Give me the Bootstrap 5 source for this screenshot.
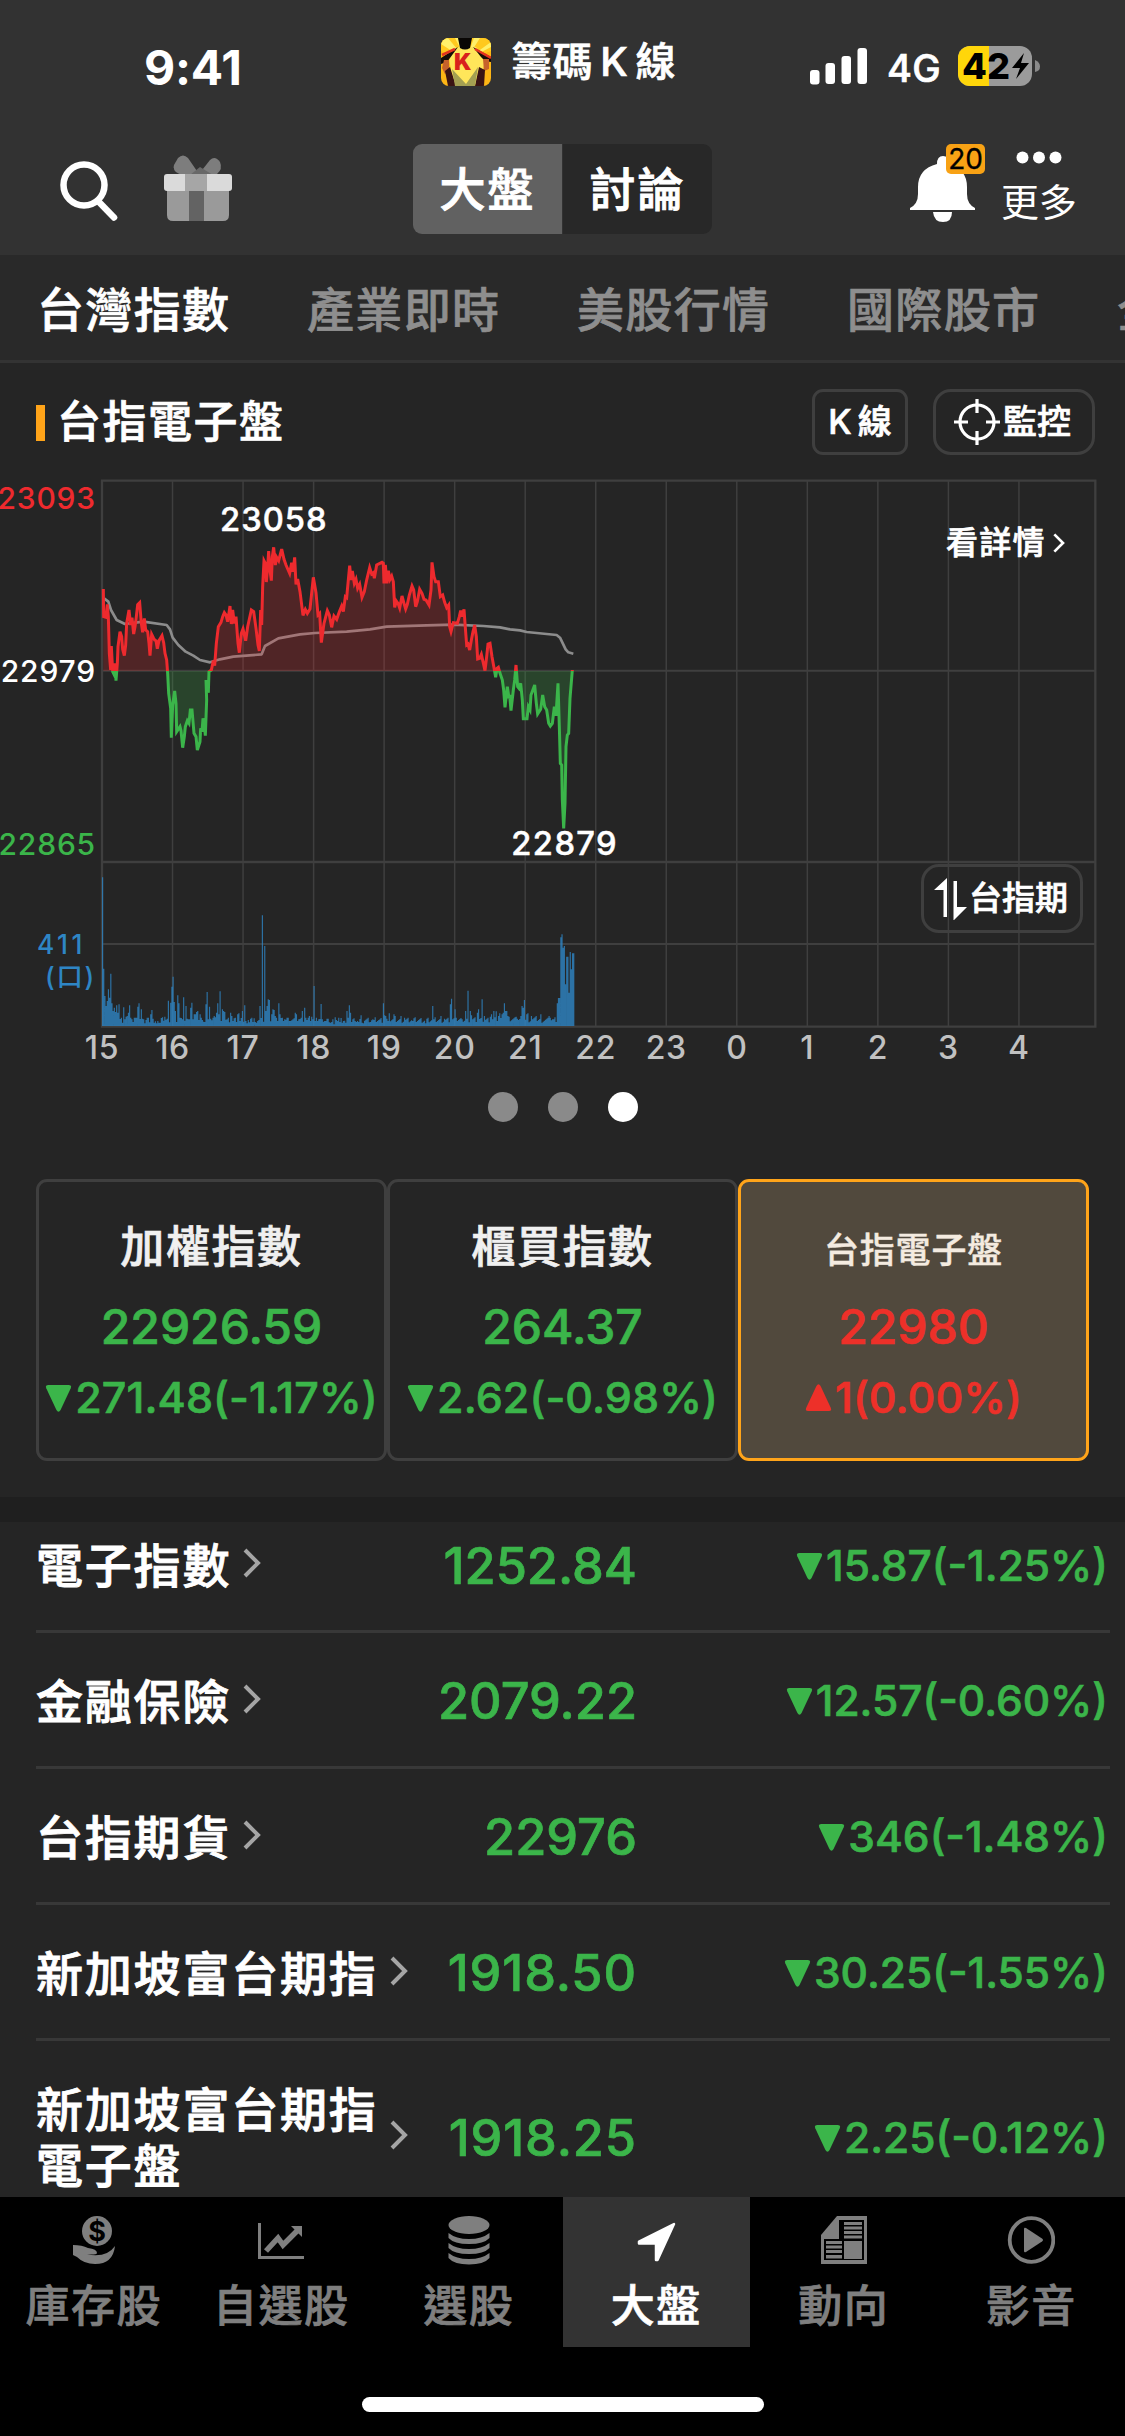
<!DOCTYPE html>
<html lang="zh-Hant">
<head>
<meta charset="utf-8">
<meta name="viewport" content="width=device-width, initial-scale=1">
<title>籌碼K線</title>
<link rel="stylesheet" href="https://cdn.jsdelivr.net/npm/bootstrap@5.3.0/dist/css/bootstrap.min.css">
<style>
:root{--up:#ed3029;--down:#3bb54a;--line:#3f3f3f}
html,body{overflow:hidden}
body{width:1125px;height:2436px;background:#252525;color:#fff;font-family:Inter,"Noto Sans CJK TC",sans-serif;line-height:1;font-weight:500;-webkit-text-stroke:.7px currentColor}
svg{display:block;flex:none}
svg text{-webkit-text-stroke:0}
.statusbar{height:144px;padding:0 83px 0 144px;background:#323232}
.clock{font-size:48px;font-weight:700;width:297px;padding-top:44px;letter-spacing:-.2px;-webkit-text-stroke:0}
.appname{font-size:40px;letter-spacing:1px;word-spacing:-5px;margin-left:21px;padding-top:42px;width:299px;white-space:nowrap}
.signal{padding-top:48px}
.netw{font-size:38px;font-weight:500;margin-left:19px;padding-top:49px;width:71px;letter-spacing:.3px}
.topbar{height:111px;background:#323232;padding-left:60px}
.seg{margin-left:180px}
.seg .btn{width:149px;height:90px;padding:0;border:0;border-radius:9px;font-size:46px;font-weight:500;letter-spacing:2px;color:#fff;background:#282828;line-height:90px;-webkit-text-stroke:.9px #fff}
.seg .btn.active{background:#616161;margin-right:2px;color:#fff}
.bellbox{margin-left:197px;height:90px;width:78px}
.pill{left:37px;top:0;width:39px;height:30px;background:#f8a215;color:#000;border-radius:5px;font-size:28px;line-height:31px;font-weight:400;-webkit-text-stroke:.3px #000}
.morebox{width:90px;height:90px;margin-left:7px;font-size:38px;font-weight:400;-webkit-text-stroke:0}
.tabsrow{height:105px;background:#292929;color:#8e8e8e;padding:3px 0 0 37px;font-size:47px;letter-spacing:1.35px}
.tabsrow span{flex:0 0 270px;white-space:nowrap}
.rule-top{height:3px;background:#333}
.sect{height:107px;padding:26px 30px 0 36px}
.accent{width:9px;height:36px;background:#ffa419}
.sect h1{font-size:44px;letter-spacing:1.5px;font-weight:500;margin:0 0 0 12px;flex:1}
.tool{border:3px solid var(--line);height:66px;font-size:34px}
.chartwrap{height:608px}
.swap{left:921px;top:394px;width:162px;height:69px;border-radius:18px;font-size:33px}
.more-link{left:946px;top:57px;font-size:32px;letter-spacing:1.2px}
.pager{height:31px;gap:30px;margin-top:14px}
.pager i{width:30px;height:30px;border-radius:50%;background:#8a8a8a}
.cards{padding:56px 36px 36px;gap:0}
.idx{width:351px;height:282px;border:3px solid var(--line);border-radius:11px;color:#f0f0f0;padding-top:38px;white-space:nowrap}
.idx .ttl{font-size:44px;height:54px;letter-spacing:1.6px}
.idx .val{font-size:48px;height:58px;margin-top:29px}
.idx .chg{font-size:43px;height:50px;margin-top:15px;letter-spacing:.1px}
.idx.on{border-color:#ffa41a;background:#51493d}
.idx.on .ttl{font-size:35px;letter-spacing:.8px;color:#f4ebe0;padding-top:6px;-webkit-text-stroke-width:.4px}
.up{color:var(--up)}.down{color:var(--down)}
.band{height:25px;background:#1f1f1f}
.quotes{height:675px;overflow:hidden;padding:0 15px 0 36px}
.q{height:136px;border-bottom:3px solid #383838;padding-top:4px}
.q:first-child{height:111px}
.q:first-child>*{position:relative;top:-12px}
.q:last-child{height:200px;border:0;padding-top:0;margin-top:-3px}
.q .nm{font-size:47px;letter-spacing:1.8px;line-height:56px;-webkit-text-stroke-width:.9px}
.q .grp{width:390px;gap:12px;white-space:nowrap}
.q .grp svg{margin-bottom:6px}
.q .num{font-size:50.5px;width:211px;font-weight:500;white-space:nowrap}
.q .num.wide{letter-spacing:.9px}
.q .dl{font-size:42.5px;flex:1;padding-right:2px}
.tabbar{height:150px;background:#000;color:#7f7f7f;font-size:44px;letter-spacing:1.5px}
.tabbar>div{flex:1;padding-top:18px}
.tabbar .active{background:#333;color:#fff}
.tabbar svg{margin-bottom:19px}
.homebar{height:89px;background:#000;padding-top:50px}
.homebar i{width:402px;height:15px;border-radius:8px;background:#fff}
</style>
</head>
<body>
<svg width="0" height="0" class="position-absolute">
<symbol id="dn" viewBox="0 0 26 28"><path d="M3 1.5H23Q26 1.5 24.8 4.5L15 25.5Q13 29 11 25.5L1.200 4.500Q0 1.500 3 1.500Z" fill="currentColor"/></symbol>
<symbol id="upt" viewBox="0 0 26 28"><path d="M3 26.500H23Q26 26.500 24.800 23.500L15 2.500Q13-1 11 2.500L1.200 23.500Q0 26.500 3 26.500Z" fill="currentColor"/></symbol>
<symbol id="chev" viewBox="0 0 18 30"><path d="M2 2 15 15 2 28" fill="none" stroke="#a5a5a5" stroke-width="4"/></symbol>
</svg>

<header>
<div class="statusbar d-flex align-items-start">
  <div class="clock">9:41</div>
  <svg width="50" height="48" viewBox="0 0 50 48" style="margin-top:38px">
    <defs><clipPath id="ic"><rect width="50" height="48" rx="8"/></clipPath></defs>
    <g clip-path="url(#ic)"><rect width="50" height="48" fill="#fdb515"/>
    <path d="M0 0H50V13L25 22 0 13Z" fill="#ffc91e"/><path d="M25 22 0 6V0H7ZM25 22 14 0H19ZM25 22 33 0H39ZM25 22 50 4V9Z" fill="#fff06a"/>
    <path d="M17 9 8 20 12 46H40L44 20 35 9Z" fill="#ffe65a"/>
    <path d="M17 0H31L29 10Q24 13 19 10Z" fill="#090705"/>
    <path d="M0 20 17 9 9 20 6 24 0 26ZM50 19 32 9 40 19 44 23 50 24Z" fill="#160d08"/>
    <path d="M1 17 14 11M34 11 50 20" stroke="#e3331e" stroke-width="2.500"/>
    <path d="M3 22H8V33L4 36 1 30ZM42 21H48V31L43 33Z" fill="#c6622b"/>
    <path d="M4 33 9 29 15 48H7ZM34 48 38 29 44 32 43 48Z" fill="#3a1414"/>
    <path d="M11 31 25 46 37 29 34 48H14Z" fill="#a4a052"/>
    <text x="13" y="32" font-family="Inter" font-weight="900" font-size="23" fill="#d8211c">K</text></g>
  </svg>
  <div class="appname">籌碼 K 線</div>
  <svg class="signal" width="58" height="86" viewBox="0 48 58 38" style="height:86px"><g fill="#fff"><rect x="0" y="70" width="9.500" height="14.500" rx="3"/><rect x="15.500" y="63" width="9.500" height="21" rx="3"/><rect x="31.500" y="56" width="9.500" height="28" rx="3"/><rect x="47.500" y="48" width="9.500" height="36" rx="3"/></g></svg>
  <div class="netw">4G</div>
  <svg width="84" height="40" viewBox="0 0 84 40" style="margin-top:46px"><defs><clipPath id="bt"><rect width="74" height="40" rx="12"/></clipPath></defs><g clip-path="url(#bt)"><rect width="74" height="40" fill="#9b9b9b"/><rect width="31" height="40" fill="#ffd60a"/></g><path d="M77 14Q82 16 82 20.500T77 26Z" fill="#8a8a8a"/><text x="4" y="33" font-family="Inter" font-weight="800" font-size="36" textLength="48" lengthAdjust="spacingAndGlyphs">42</text><path d="M66 7 54 22H62L58 33 71 17H63Z"/></svg>
</div>
<div class="topbar d-flex">
  <svg width="58" height="63" viewBox="0 0 58 63" style="margin-top:15px"><circle cx="24" cy="26" r="20.500" fill="none" stroke="#fff" stroke-width="6.500"/><path d="M38 42 54 58.500" stroke="#fff" stroke-width="6.500" stroke-linecap="round"/></svg>
  <svg width="70" height="68" viewBox="0 0 70 68" style="margin:10px 0 0 45px"><path d="M36 20 25 4Q20-1 15 4L11 11Q9 19 20 21H36Z" fill="#7d7d7d"/><path d="M36 20 47 6Q52 1 57 8 60 15 54 20Z" fill="#7d7d7d"/><path d="M27 21 37 13 50 21Z" fill="#686868"/><path d="M4 37H66V61Q66 67 60 67H10Q4 67 4 61Z" fill="#9a9a9a"/><path d="M26 37H41V67H26Z" fill="#636363"/><rect x="1" y="20" width="68" height="17" rx="3" fill="#dadada"/><path d="M22 20H44V37H22Z" fill="#a6a6a6"/></svg>
  <div class="seg btn-group align-self-start"><button class="btn active">大盤</button><button class="btn">討論</button></div>
  <div class="bellbox position-relative">
    <svg width="68" height="80" viewBox="0 0 68 80"><path d="M34 12Q40 12 40 20 58 25 58 43V50Q58 60 66 64V66H1V64Q9 60 9 50V43Q9 25 28 20 28 12 34 12ZM24 68H43Q43 78 34 78T24 68Z" fill="#fff"/></svg>
    <span class="pill position-absolute text-center">20</span>
  </div>
  <div class="morebox d-flex flex-column align-items-center">
    <svg width="46" height="28" viewBox="0 0 46 28"><g fill="#fff"><circle cx="6.500" cy="13.500" r="6"/><circle cx="23" cy="13.500" r="6"/><circle cx="39.500" cy="13.500" r="6"/></g></svg><div style="margin-top:11px">更多</div>
  </div>
</div>
<nav class="tabsrow d-flex align-items-center overflow-hidden"><span class="text-white">台灣指數</span><span>產業即時</span><span>美股行情</span><span>國際股市</span><span>全球指數</span></nav>
<div class="rule-top"></div>
</header>

<main>
<div class="sect d-flex align-items-start">
  <div class="d-flex align-items-center flex-fill" style="height:66px"><div class="accent" style="margin-top:2px"></div><h1>台指電子盤</h1></div>
  <div class="tool d-flex align-items-center justify-content-center" style="width:96px;border-radius:11px;margin-right:25px;word-spacing:-3px">K 線</div>
  <div class="tool d-flex align-items-center justify-content-center" style="width:162px;border-radius:18px;padding-right:3px"><svg width="46" height="46" viewBox="0 0 46 46" style="margin-right:3px"><g fill="none" stroke="#fff" stroke-width="3.200"><circle cx="23" cy="23" r="17"/><path d="M23 0V14M23 32V46M0 23H14M32 23H46"/></g></svg>監控</div>
</div>
<div class="chartwrap position-relative">
<svg id="chart" width="1125" height="608" viewBox="0 300 3375 1824" font-family="Inter, 'Noto Sans CJK TC', sans-serif" font-weight="500">
  <defs><clipPath id="above"><path d="M0 300H3375V903H0Z"/></clipPath><clipPath id="below"><path d="M0 903H3375V2000H0Z"/></clipPath></defs>
  <g stroke="#3f3f3f" fill="none"><path id="vg" stroke-width="4.500"/><path d="M306 902H3287M306 1722H3287" stroke-width="6"/><path d="M306 1476H3287" stroke-width="8"/><path d="M306 332H3286V1970H306Z" stroke-width="7"/></g>
  <path id="vol" fill="#2e86c5" opacity=".8"/>
  <path id="avg" fill="none" stroke="#8c8c8c" stroke-width="8" stroke-linejoin="round"/>
  <g clip-path="url(#above)"><path class="area" fill="#ee2a2e" opacity=".22"/><path class="ln" fill="none" stroke="#ee2a2e" stroke-width="9"/></g>
  <g clip-path="url(#below)"><path class="area" fill="#3bb54a" opacity=".22"/><path class="ln" fill="none" stroke="#3bb54a" stroke-width="9"/></g>
  <g font-size="90" text-anchor="end" letter-spacing="2.500"><text x="288" y="416" fill="#ee2a2e">23093</text><text x="288" y="936" fill="#fff">22979</text><text x="288" y="1455" fill="#3bb54a">22865</text></g>
  <g font-size="98" fill="#fff" text-anchor="middle" stroke="#fff" stroke-width="1.500"><text x="820" y="483" textLength="320">23058</text><text x="1692" y="1455" textLength="316">22879</text></g>
  <g fill="#2e86c5"><text x="111" y="1751" font-size="79" textLength="136">411</text><text x="135" y="1849" font-size="79" textLength="148">(口)</text></g>
  <g id="hours" font-size="96" fill="#c1c1c1" text-anchor="middle" letter-spacing="2"></g>
</svg>
<div class="more-link position-absolute d-flex align-items-center">看詳情<svg width="12" height="20" viewBox="0 0 18 30" style="margin-left:7px"><path d="M2 2 15 15 2 28" fill="none" stroke="#fff" stroke-width="4"/></svg></div>
<div class="swap tool position-absolute d-flex align-items-center justify-content-center"><svg width="33" height="42" viewBox="0 0 33 42" style="margin:0 2px 0 -2px"><path d="M13 0V39H9.500V12H0ZM19.500 3H23V29H33L20 42H19.500Z" fill="#fff"/></svg>台指期</div>
</div>
<div class="pager d-flex justify-content-center"><i></i><i></i><i class="bg-white"></i></div>
<section class="cards d-flex">
  <div class="idx d-flex flex-column align-items-center"><div class="ttl d-flex align-items-center">加權指數</div><div class="val down">22926.59</div><div class="chg down d-flex"><svg width="27" height="30" style="margin:7px 3px 0 0"><use href="#dn"/></svg>271.48(-1.17%)</div></div>
  <div class="idx d-flex flex-column align-items-center"><div class="ttl d-flex align-items-center">櫃買指數</div><div class="val down">264.37</div><div class="chg down d-flex"><svg width="27" height="30" style="margin:7px 3px 0 0"><use href="#dn"/></svg>2.62(-0.98%)</div></div>
  <div class="idx on d-flex flex-column align-items-center"><div class="ttl d-flex align-items-center">台指電子盤</div><div class="val up">22980</div><div class="chg up d-flex"><svg width="27" height="30" style="margin:7px 3px 0 0"><use href="#upt"/></svg>1(0.00%)</div></div>
</section>
<div class="band"></div>
<section class="quotes">
  <div class="q d-flex align-items-center"><div class="grp d-flex align-items-center"><div class="nm">電子指數</div><svg width="18" height="30"><use href="#chev"/></svg></div><div class="num down text-end">1252.84</div><div class="dl down d-flex justify-content-end"><svg width="27" height="30" style="margin:6px 3px 0 0"><use href="#dn"/></svg>15.87(-1.25%)</div></div>
  <div class="q d-flex align-items-center"><div class="grp d-flex align-items-center"><div class="nm">金融保險</div><svg width="18" height="30"><use href="#chev"/></svg></div><div class="num down text-end">2079.22</div><div class="dl down d-flex justify-content-end"><svg width="27" height="30" style="margin:6px 3px 0 0"><use href="#dn"/></svg>12.57(-0.60%)</div></div>
  <div class="q d-flex align-items-center"><div class="grp d-flex align-items-center"><div class="nm">台指期貨</div><svg width="18" height="30"><use href="#chev"/></svg></div><div class="num down text-end">22976</div><div class="dl down d-flex justify-content-end"><svg width="27" height="30" style="margin:6px 3px 0 0"><use href="#dn"/></svg>346(-1.48%)</div></div>
  <div class="q d-flex align-items-center"><div class="grp d-flex align-items-center"><div class="nm">新加坡富台期指</div><svg width="18" height="30"><use href="#chev"/></svg></div><div class="num wide down text-end">1918.50</div><div class="dl down d-flex justify-content-end"><svg width="27" height="30" style="margin:6px 3px 0 0"><use href="#dn"/></svg>30.25(-1.55%)</div></div>
  <div class="q d-flex align-items-center"><div class="grp d-flex align-items-center"><div class="nm">新加坡富台期指<br>電子盤</div><svg width="18" height="30"><use href="#chev"/></svg></div><div class="num wide down text-end">1918.25</div><div class="dl down d-flex justify-content-end"><svg width="27" height="30" style="margin:6px 3px 0 0"><use href="#dn"/></svg>2.25(-0.12%)</div></div>
</section>
</main>

<footer>
<div class="tabbar d-flex text-center">
  <div class="d-flex flex-column align-items-center"><svg width="46" height="50" viewBox="0 0 46 50"><circle cx="26" cy="16" r="15" fill="currentColor"/><text x="26" y="26" font-size="27" font-weight="700" font-family="Inter" text-anchor="middle" fill="#000" letter-spacing="0">$</text><path d="M2 30Q11 30 17 33 26 34 26 38 26 40 16 39.500 36 43 44 31 42 49 24 49 13 49 6 42L2 40Z" fill="currentColor"/></svg>庫存股</div>
  <div class="d-flex flex-column align-items-center"><svg width="46" height="50" viewBox="0 0 46 50"><path d="M1.500 8V42.500H46" fill="none" stroke="currentColor" stroke-width="3"/><path d="M8 36 20 23 25 30 39 16" fill="none" stroke="currentColor" stroke-width="5.500"/><path d="M33 11H44V22Z" fill="currentColor"/></svg>自選股</div>
  <div class="d-flex flex-column align-items-center"><svg width="42" height="50" viewBox="0 0 42 50"><g fill="currentColor"><ellipse cx="21" cy="10" rx="20.500" ry="9"/><path d="M.5 18Q8 24 21 24T41.500 18V23Q36 29 21 29T.5 23ZM.5 28Q8 34 21 34T41.500 28V33Q36 39 21 39T.5 33ZM.5 38Q8 44 21 44T41.500 38V43Q36 49.500 21 49.500T.5 43Z"/></g></svg>選股</div>
  <div class="active d-flex flex-column align-items-center"><svg width="40" height="50" viewBox="0 0 40 50"><path d="M38 9 21.500 45H20V28.500H3V26.500Z" fill="#fff" stroke="#fff" stroke-width="2.500" stroke-linejoin="round"/></svg>大盤</div>
  <div class="d-flex flex-column align-items-center"><svg width="46" height="50" viewBox="0 0 46 50"><path d="M16 1H46V49H0V20Z" fill="currentColor"/><path d="M18 5H43V45H3V24H18Z" fill="#000"/><path d="M23 7H41V10H23ZM23 11.500H41V14.500H23ZM23 16H41V19H23ZM23 20.500H41V23.500H23ZM23 26H41V44H23ZM5 26H21V29H5ZM5 30.500H21V33.500H5ZM5 35H21V38H5ZM5 40H21V43.500H5Z" fill="currentColor"/></svg>動向</div>
  <div class="d-flex flex-column align-items-center"><svg width="48" height="50" viewBox="0 0 48 50"><circle cx="24.500" cy="25" r="21.800" fill="none" stroke="currentColor" stroke-width="3.800"/><path d="M17 14Q17 12 19 13L35 23.500Q37 25 35 26.500L19 37Q17 38 17 36Z" fill="currentColor"/></svg>影音</div>
</div>
<div class="homebar d-flex justify-content-center"><i></i></div>
</footer>

<script src="https://cdn.jsdelivr.net/npm/bootstrap@5.3.0/dist/js/bootstrap.bundle.min.js"></script>
<script>
const price="310,657 311,740 318,742 322,703 325,740 328,850 332,900 334,828 338,905 343,915 345,880 348,932 352,880 354,830 360,785 365,800 368,838 373,857 377,825 380,760 387,720 392,765 396,743 401,792 405,770 409,740 413,704 419,698 424,760 428,787 433,745 437,780 443,785 447,820 450,857 455,793 460,803 464,810 468,812 472,836 477,812 486,797 491,818 495,850 500,870 503,910 506,970 512,1015 514,1103 518,1005 524,963 528,1000 530,1085 540,1070 543,1082 548,1133 553,1100 556,1070 562,1052 567,1060 571,1020 576,1020 582,1090 588,1100 592,1140 600,1115 602,1075 606,1085 609,1045 613,1065 616,1097 620,990 618,930 625,968 627,905 634,900 640,872 644,887 649,820 655,770 663,757 668,740 673,728 678,735 683,755 690,708 694,762 698,720 703,760 708,740 714,820 718,848 724,790 729,777 737,812 743,770 754,720 761,725 768,775 774,825 778,843 782,720 785,765 788,650 792,572 796,580 799,636 803,590 806,543 810,600 814,632 817,560 821,532 826,585 830,562 836,572 845,537 852,568 858,585 869,610 875,578 879,605 884,562 888,643 893,627 900,665 909,736 916,718 922,730 930,717 940,622 948,668 954,735 959,730 964,818 972,760 982,722 988,735 995,772 1002,738 1010,748 1018,725 1025,708 1030,725 1036,680 1040,683 1044,640 1049,587 1053,630 1057,603 1063,640 1068,628 1073,655 1079,643 1086,682 1093,665 1100,630 1109,593 1115,612 1120,608 1123,625 1130,585 1146,577 1150,580 1152,640 1156,585 1161,640 1165,602 1170,628 1175,618 1180,635 1184,712 1189,693 1194,700 1199,714 1206,678 1212,700 1217,717 1222,703 1228,675 1236,648 1241,660 1247,710 1252,695 1259,658 1266,670 1272,688 1278,690 1287,705 1293,660 1296,577 1302,620 1307,635 1315,635 1321,680 1328,675 1334,697 1340,713 1346,705 1349,770 1353,785 1360,758 1372,760 1378,740 1382,722 1387,740 1392,718 1395,760 1400,825 1404,822 1409,840 1415,805 1419,785 1424,765 1429,800 1433,867 1439,865 1444,853 1449,875 1455,902 1460,860 1464,822 1470,820 1476,860 1482,893 1487,922 1491,895 1495,892 1500,910 1507,930 1511,960 1515,1012 1522,950 1527,985 1529,975 1533,1022 1540,960 1544,930 1548,885 1553,950 1557,955 1562,940 1567,990 1570,1046 1581,1046 1585,1010 1590,1020 1593,975 1604,945 1609,1000 1613,1032 1622,1018 1628,975 1634,1010 1640,1020 1646,1060 1651,1068 1657,1060 1663,1010 1668,1037 1674,940 1678,1070 1681,1180 1685,1185 1687,1290 1691,1375 1695,1300 1698,1130 1702,1095 1706,1090 1710,985 1717,900";
const average="312,685 325,695 333,720 350,750 375,762 430,755 500,765 510,778 518,803 535,825 557,845 580,857 600,870 630,877 660,868 700,860 785,853 795,828 835,805 900,793 945,789 1040,785 1110,778 1160,770 1280,766 1360,764 1450,768 1500,772 1530,778 1560,781 1580,786 1670,795 1680,803 1697,838 1705,847 1720,851";
const volume="307:446 310:172 313:90 317:60 320:75 323:110 327:85 331:157 334:68 338:45 341:55 345:42 348:62 352:40 355:25 358:65 362:25 365:20 369:56 373:20 376:28 380:30 384:40 387:62 391:25 394:20 398:12 401:25 405:25 408:25 412:58 415:30 418:68 422:50 426:22 430:20 434:8 438:18 442:25 446:25 450:35 454:48 458:22 462:10 466:14 470:8 475:10 480:10 486:26 490:16 495:28 500:22 506:76 510:70 514:118 517:148 521:72 524:30 527:45 531:92 535:68 538:25 541:15 545:20 549:86 552:50 556:60 559:25 563:20 567:20 570:55 574:70 577:20 581:35 585:35 589:42 594:45 598:35 603:25 608:18 613:12 618:65 622:102 625:20 629:58 633:22 638:25 643:30 648:40 652:68 655:35 658:104 662:15 666:50 670:45 675:42 680:20 685:25 690:40 695:30 700:15 705:25 711:35 716:38 721:15 726:45 732:62 736:15 740:8 745:18 750:22 756:25 760:12 765:12 770:10 775:18 781:60 785:25 788:332 793:240 796:45 800:60 805:80 809:78 813:35 817:50 821:48 825:30 830:25 835:68 839:35 845:25 850:15 855:20 860:25 866:15 872:15 878:20 884:40 890:35 896:20 902:25 908:45 912:55 916:25 921:18 926:30 932:15 936:28 940:120 944:15 950:25 956:20 961:66 966:20 972:15 978:15 984:22 990:10 996:12 1002:5 1008:18 1014:25 1020:12 1030:15 1038:10 1042:45 1046:62 1050:40 1055:12 1065:15 1075:12 1081:32 1090:8 1100:22 1110:12 1120:18 1139:20 1150:68 1154:32 1158:30 1162:15 1168:38 1182:35 1186:30 1204:30 1214:25 1237:15 1257:18 1276:8 1298:60 1302:20 1324:30 1334:22 1350:65 1353:82 1364:50 1368:25 1384:20 1397:45 1402:106 1410:45 1414:32 1432:40 1436:50 1445:80 1451:30 1470:28 1474:35 1480:45 1487:44 1494:30 1497:38 1505:35 1508:40 1512:68 1516:45 1519:45 1523:30 1527:28 1548:28 1552:22 1563:30 1567:60 1570:55 1574:78 1578:35 1584:38 1595:30 1608:30 1621:35 1646:30 1650:25 1659:20 1672:68 1676:84 1679:84 1682:266 1685:275 1689:235 1692:240 1696:125 1699:208 1702:208 1706:100 1709:222 1713:170 1716:218 1719:218 1722:90";
const $=s=>document.querySelector(s), X0=306, STEP=3.525, ZERO=903, BASE=1968;
const line="M"+price.replace(/ /g,"L");
document.querySelectorAll(".ln").forEach(p=>p.setAttribute("d",line));
document.querySelectorAll(".area").forEach(p=>p.setAttribute("d",line+`V${ZERO}H310Z`));
$("#avg").setAttribute("d","M"+average.replace(/ /g,"L"));
const slots=[];
volume.split(" ").forEach(v=>{const [x,h]=v.split(":").map(Number);const i=Math.max(0,Math.round((x-X0)/STEP-.3));slots[i]=Math.max(slots[i]||0,h)});
let d="";
for(let i=0;i<402;i++){const h=slots[i]||10+(i*37%17);const x=(X0+i*STEP).toFixed(1);d+=`M${x} ${BASE}v${-h}h3.525V${BASE}Z`}
$("#vol").setAttribute("d",d);
let g="",t="";
for(let i=0;i<14;i++){const x=X0+i*211.6;if(i)g+=`M${x} 332V1970`;t+=`<text x="${x}" y="2067">${(15+i)%24}</text>`}
$("#vg").setAttribute("d",g);$("#hours").innerHTML=t;
</script>
</body>
</html>
